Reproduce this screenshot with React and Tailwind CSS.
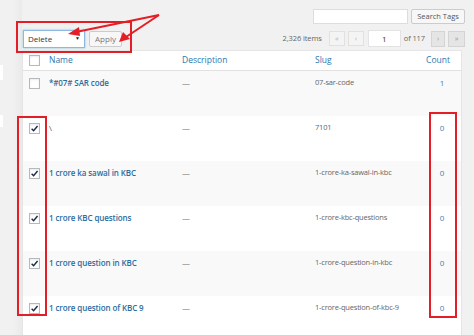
import React from 'react';

const rows = [
  { name: '*#07# SAR code', slug: '07-sar-code', count: '1', checked: false },
  { name: '\\', slug: '7101', count: '0', checked: true, plain: true },
  { name: '1 crore ka sawal in KBC', slug: '1-crore-ka-sawal-in-kbc', count: '0', checked: true },
  { name: '1 crore KBC questions', slug: '1-crore-kbc-questions', count: '0', checked: true },
  { name: '1 crore question in KBC', slug: '1-crore-question-in-kbc', count: '0', checked: true },
  { name: '1 crore question of KBC 9', slug: '1-crore-question-of-kbc-9', count: '0', checked: true },
];

const Checkbox = ({ checked }) => (
  <span className="flex h-[11px] w-[11px] items-center justify-center border border-[#b4b9be] bg-white shadow-[inset_0_1px_2px_rgba(0,0,0,0.08)]">
    {checked && (
      <svg viewBox="0 0 10 10" className="h-[9px] w-[9px]">
        <path d="M1.8 5.2 L4 7.4 L8.4 2.2" fill="none" stroke="#1d2b46" strokeWidth="1.6" />
      </svg>
    )}
  </span>
);

const cols = 'grid grid-cols-[26px_133px_133px_106px_1fr]';

export default function App() {
  return (
    <div className="relative flex h-[335px] w-[474px] overflow-hidden bg-[#f1f1f1] font-['Open_Sans',sans-serif] text-[8px] text-[#555]">
      {/* cut-off left form column */}
      <div className="w-[22px] shrink-0 bg-gradient-to-r from-[#f1f1f1] from-60% to-[#eaeaea]">
        <div className="mt-[65px] h-[15px] w-[3px] bg-white" />
        <div className="mt-[35px] h-[12px] w-[3px] bg-white" />
      </div>

      <div className="flex-1 pr-[9px]">
        <div className="flex h-[30px] items-start justify-end pt-[9px]">
          <div className="h-[15px] w-[95px] border border-[#ddd] bg-white" />
          <button className="ml-[3px] h-[15px] w-[54px] rounded-[2px] border border-[#ccc] bg-[#f7f7f7] text-[7.5px] leading-none text-[#555]">
            Search Tags
          </button>
        </div>

        <div className="flex h-[20px] items-start justify-between">
          <div className="flex items-center">
            <div className="ml-[1px] flex h-[18px] w-[62px] items-center justify-between border border-[#8db8e0] bg-white px-[4px] text-[8px] text-[#32373c] shadow-[0_0_2px_rgba(30,140,190,0.5)]">
              <span>Delete</span>
              <span className="text-[5px] text-[#222]">▼</span>
            </div>
            <button className="ml-[4px] h-[16px] w-[33px] rounded-[2px] border border-[#ccc] bg-[#f7f7f7] text-[8px] leading-none text-[#777]">
              Apply
            </button>
          </div>
          <div className="flex items-center text-[7.5px] tracking-[-0.1px] text-[#666]">
            <span className="mr-[7px]">2,326 items</span>
            <span className="flex h-[15px] w-[16px] items-center justify-center border border-[#e1e1e1] bg-[#f4f4f4] text-[#b0b5ba]">«</span>
            <span className="ml-[3px] flex h-[15px] w-[16px] items-center justify-center border border-[#e1e1e1] bg-[#f4f4f4] text-[#b0b5ba]">‹</span>
            <span className="ml-[4px] flex h-[17px] w-[33px] items-center justify-center border border-[#e3e3e3] bg-white text-[8px] text-[#333]">1</span>
            <span className="ml-[3px] mr-[6px]">of 117</span>
            <span className="flex h-[16px] w-[14px] items-center justify-center border border-[#d4d4d4] bg-[#e5e5e5] text-[#999]">›</span>
            <span className="ml-[3px] flex h-[16px] w-[17px] items-center justify-center border border-[#d4d4d4] bg-[#e5e5e5] text-[#999]">»</span>
          </div>
        </div>

        <div className="mr-[3px] border border-[#e5e5e5] bg-white">
          <div className={`${cols} h-[20px] items-center border-b border-[#e1e1e1] text-[8.5px] text-[#2e78b0]`}>
            <div className="pl-[6px]"><Checkbox /></div>
            <div>Name</div>
            <div>Description</div>
            <div>Slug</div>
            <div className="pr-[6px] text-center">Count</div>
          </div>
          {rows.map((r, i) => (
            <div key={i} className={`${cols} h-[45px] items-start pt-[6px] ${i % 2 === 0 ? 'bg-[#f9f9f9]' : 'bg-white'}`}>
              <div className="pl-[6px] pt-[1px]"><Checkbox checked={r.checked} /></div>
              <div className={`text-[8px] tracking-[-0.1px] ${r.plain ? 'font-normal text-[#555]' : 'font-semibold text-[#2a6d9e]'}`}>{r.name}</div>
              <div className="text-[#777]">—</div>
              <div className="text-[7.5px] tracking-[-0.2px] text-[#666]">{r.slug}</div>
              <div className="pl-[2px] text-center text-[#3b82b8]">{r.count}</div>
            </div>
          ))}
        </div>
      </div>

      {/* annotations */}
      <div className="absolute left-[16px] top-[21px] h-[32px] w-[116px] border-2 border-[#e41e26]" />
      <div className="absolute left-[17px] top-[116px] h-[200px] w-[30px] border-2 border-[#e41e26]" />
      <div className="absolute left-[429px] top-[112px] h-[206px] w-[28px] border-2 border-[#e41e26]" />
      <svg className="pointer-events-none absolute left-0 top-0" width="474" height="335">
        <line x1="159" y1="15" x2="76" y2="32" stroke="#e41e26" strokeWidth="2" />
        <polygon points="68,34 79,27 80,36" fill="#e41e26" />
        <line x1="159" y1="15" x2="126" y2="37" stroke="#e41e26" strokeWidth="2" />
        <polygon points="119,42 123,32 130,39" fill="#e41e26" />
      </svg>
    </div>
  );
}
